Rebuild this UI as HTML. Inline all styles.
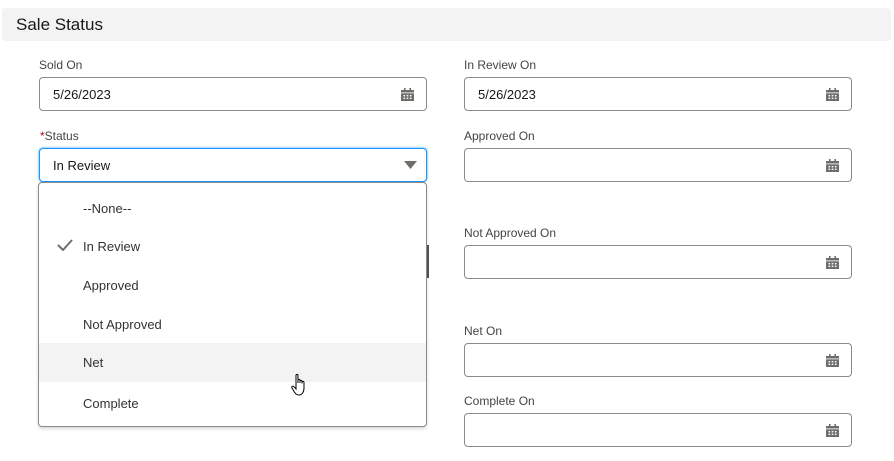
<!DOCTYPE html>
<html><head><style>
body{margin:0;width:894px;height:461px;background:#fff;font-family:"Liberation Sans",sans-serif;color:#181818;position:relative;overflow:hidden}
.hdr{position:absolute;left:2px;top:8px;width:889px;height:33px;background:#f3f3f3;border-radius:4px}
.hdr span{position:absolute;left:14px;top:7px;font-size:17px;color:#181818}
.lbl{position:absolute;font-size:12px;color:#444}
.inp{position:absolute;width:386px;height:32px;border:1px solid #8a8a8a;border-radius:4px;background:#fff;box-sizing:content-box}
.inp .v{position:absolute;left:13px;top:9px;font-size:13px;color:#181818}
.cal{position:absolute;right:12px;top:10px}
.dd{position:absolute;left:38px;top:182px;width:387px;height:243px;border:1px solid #8a8a8a;border-radius:4px;background:#fff;box-shadow:0 2px 3px rgba(0,0,0,.15)}
.it{position:absolute;left:0;width:387px;height:39px;font-size:13px;color:#333}
.it span{position:absolute;left:44px;top:12px}
</style></head><body>
<div class="hdr"><span>Sale Status</span></div>

<div class="lbl" style="left:39px;top:58px">Sold On</div>
<div class="inp" style="left:39px;top:77px;height:32px"><span class="v">5/26/2023</span>
<svg class="cal" width="13" height="13" viewBox="0 0 13 13"><rect x="3" y="0" width="1.6" height="3" fill="#706e6b"/><rect x="8.4" y="0" width="1.6" height="3" fill="#706e6b"/><rect x="0" y="2" width="13" height="2.5" fill="#706e6b"/><rect x="0" y="5.3" width="13" height="7.7" fill="#706e6b"/><g fill="#fff"><rect x="2.5" y="7" width="1.6" height="1.4"/><rect x="5.7" y="7" width="1.6" height="1.4"/><rect x="8.9" y="7" width="1.6" height="1.4"/><rect x="2.5" y="9.6" width="1.6" height="1.4"/><rect x="5.7" y="9.6" width="1.6" height="1.4"/><rect x="8.9" y="9.6" width="1.6" height="1.4"/></g></svg></div>

<div class="lbl" style="left:40px;top:129px"><span style="color:#ba0517">*</span>Status</div>
<div class="inp" style="left:39px;top:148px;height:32px;border-color:#1b96ff;box-shadow:0 0 2px #1b96ff"><span class="v">In Review</span>
<svg style="position:absolute;right:9px;top:12px" width="13" height="8"><path d="M0 0H13L6.5 8Z" fill="#706e6b"/></svg></div>

<div style="position:absolute;left:420px;top:245px;width:7px;height:33px;border-right:2px solid #555"></div>

<div class="dd">
<div class="it" style="top:6px"><span>--None--</span></div>
<div class="it" style="top:44px"><svg style="position:absolute;left:18px;top:12px" width="16" height="12"><path d="M1 6L6 11L15 1" stroke="#706e6b" stroke-width="2" fill="none"/></svg><span>In Review</span></div>
<div class="it" style="top:83px"><span>Approved</span></div>
<div class="it" style="top:122px"><span>Not Approved</span></div>
<div class="it" style="top:160px;background:#f3f3f3"><span>Net</span></div>
<div class="it" style="top:201px"><span>Complete</span></div>
<svg style="position:absolute;left:252px;top:190px" width="18" height="24" viewBox="0 0 18 24"><path d="M5 2.5C5 1 7 1 7 2.5V10V7.5C7 6 9 6 9 7.5V10V8.5C9 7 11 7 11 8.5V10.5V9.5C11 8 13 8 13 9.5V15C13 19 11 22 8 22C5.5 22 4.5 20.5 3 18.5L1 15C0 13.5 2 12.5 3 13.8L5 16Z" fill="#fff" stroke="#000" stroke-width="1"/></svg>
</div>

<div class="lbl" style="left:464px;top:58px">In Review On</div>
<div class="inp" style="left:464px;top:77px"><span class="v">5/26/2023</span><svg class="cal" width="13" height="13" viewBox="0 0 13 13"><use href="#c"/></svg></div>
<div class="lbl" style="left:464px;top:129px">Approved On</div>
<div class="inp" style="left:464px;top:148px"><svg class="cal" width="13" height="13"><use href="#c"/></svg></div>
<div class="lbl" style="left:464px;top:226px">Not Approved On</div>
<div class="inp" style="left:464px;top:245px"><svg class="cal" width="13" height="13"><use href="#c"/></svg></div>
<div class="lbl" style="left:464px;top:324px">Net On</div>
<div class="inp" style="left:464px;top:343px"><svg class="cal" width="13" height="13"><use href="#c"/></svg></div>
<div class="lbl" style="left:464px;top:394px">Complete On</div>
<div class="inp" style="left:464px;top:413px"><svg class="cal" width="13" height="13"><use href="#c"/></svg></div>

<svg width="0" height="0" style="position:absolute"><defs><g id="c"><rect x="3" y="0" width="1.6" height="3" fill="#706e6b"/><rect x="8.4" y="0" width="1.6" height="3" fill="#706e6b"/><rect x="0" y="2" width="13" height="2.5" fill="#706e6b"/><rect x="0" y="5.3" width="13" height="7.7" fill="#706e6b"/><g fill="#fff"><rect x="2.5" y="7" width="1.6" height="1.4"/><rect x="5.7" y="7" width="1.6" height="1.4"/><rect x="8.9" y="7" width="1.6" height="1.4"/><rect x="2.5" y="9.6" width="1.6" height="1.4"/><rect x="5.7" y="9.6" width="1.6" height="1.4"/><rect x="8.9" y="9.6" width="1.6" height="1.4"/></g></g></defs></svg>
</body></html>
